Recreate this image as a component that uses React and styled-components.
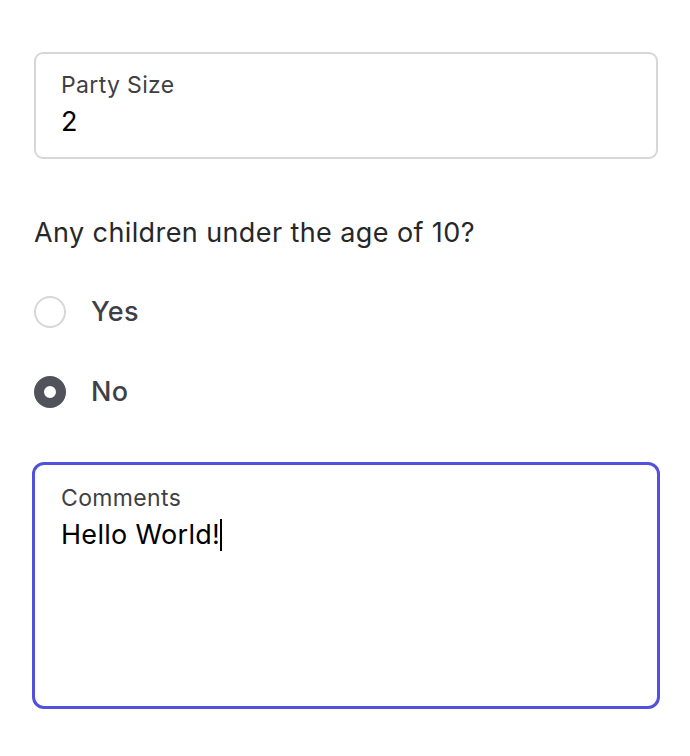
import React from "react";
import styled, { createGlobalStyle } from "styled-components";

const GlobalStyle = createGlobalStyle`
  body {
    margin: 0;
    background: #ffffff;
    font-family: Inter, "Noto Sans", sans-serif;
    -webkit-font-smoothing: antialiased;
  }
`;

const Page = styled.div`
  width: 624px;
  padding: 52px 32px 40px 34px;
  display: flex;
  flex-direction: column;
`;

const Field = styled.div`
  box-sizing: border-box;
  display: flex;
  flex-direction: column;
  gap: 6px;
  border: ${(p) => (p.focused ? "3px solid #5151dd" : "2px solid #d6d6db")};
  border-radius: ${(p) => (p.focused ? "12px" : "9px")};
  margin: ${(p) => (p.focused ? "0 -2px" : "0")};
  height: ${(p) => p.height}px;
  padding: ${(p) => (p.focused ? "19px 26px" : "17px 25px")};
  background: #fff;
`;

const FieldLabel = styled.div`
  font-size: 23px;
  line-height: 28px;
  letter-spacing: 0.35px;
  color: #3f3f46;
  font-weight: 400;
`;

const FieldValue = styled.div`
  font-size: 27px;
  line-height: 34px;
  letter-spacing: 0.3px;
  color: #000;
  display: flex;
  align-items: center;
`;

const Caret = styled.span`
  display: inline-block;
  width: 2px;
  height: 32px;
  background: #000;
  margin-left: 0;
`;

const Question = styled.div`
  margin-top: 58px;
  font-size: 27px;
  line-height: 32px;
  letter-spacing: 0.4px;
  color: #27272a;
`;

const RadioGroup = styled.div`
  margin-top: 47px;
  display: flex;
  flex-direction: column;
  gap: 48px;
`;

const RadioRow = styled.label`
  display: flex;
  align-items: center;
  gap: 25px;
  height: 32px;
`;

const RadioDot = styled.span`
  box-sizing: border-box;
  width: 32px;
  height: 32px;
  border-radius: 50%;
  border: ${(p) => (p.checked ? "10px solid #52525b" : "2px solid #d6d6db")};
  background: #fff;
`;

const RadioText = styled.span`
  font-size: 27px;
  line-height: 32px;
  letter-spacing: 0.3px;
  font-weight: 500;
  color: #3f3f46;
`;

const Spacer = styled.div`
  height: 54px;
`;

export default function App() {
  return (
    <>
      <GlobalStyle />
      <Page>
        <Field height={107}>
          <FieldLabel>Party Size</FieldLabel>
          <FieldValue>2</FieldValue>
        </Field>
        <Question>Any children under the age of 10?</Question>
        <RadioGroup>
          <RadioRow>
            <RadioDot />
            <RadioText>Yes</RadioText>
          </RadioRow>
          <RadioRow>
            <RadioDot checked />
            <RadioText>No</RadioText>
          </RadioRow>
        </RadioGroup>
        <Spacer />
        <Field focused height={247}>
          <FieldLabel>Comments</FieldLabel>
          <FieldValue>
            Hello World!
            <Caret />
          </FieldValue>
        </Field>
      </Page>
    </>
  );
}
